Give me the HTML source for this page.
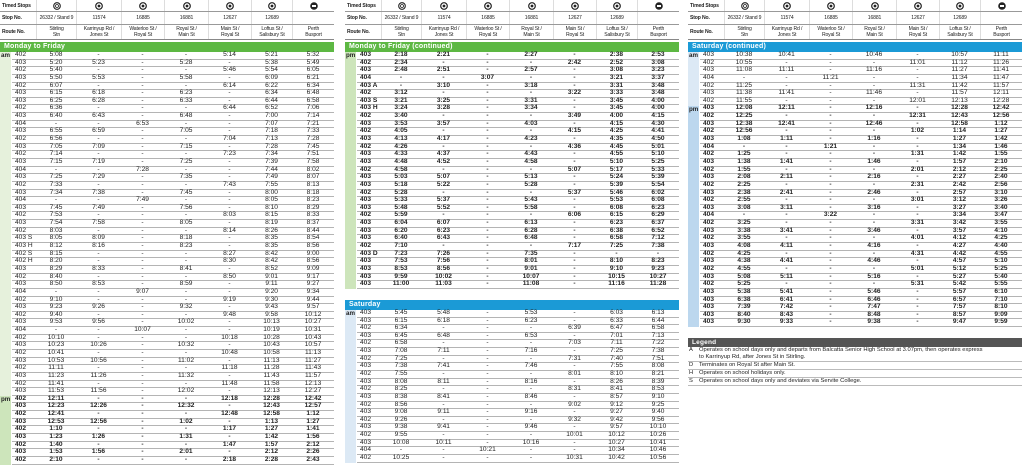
<!DOCTYPE html>
<html><head><meta charset="utf-8"><style>
*{margin:0;padding:0;box-sizing:border-box}
body{width:1024px;height:467px;background:#fff;position:relative;overflow:hidden;font-family:"Liberation Sans Narrow","Liberation Sans",sans-serif;color:#222}
.pn{position:absolute;top:0;width:334px}
.hr{display:grid;grid-template-columns:36px 40px 45px 43px 44px 43px 41px 42px;border-bottom:1px solid #999;font-size:5.1px;align-items:center;white-space:nowrap;letter-spacing:-.15px}
.hr span{text-align:center;border-left:1px solid #ddd;height:100%;display:flex;align-items:center;justify-content:center;line-height:6px;overflow:hidden}
.hr span:first-child{border-left:none;justify-content:flex-start;font-weight:bold;padding-left:2px}
.h1{height:12px}.h2{height:13px}.h3{height:15px;border-bottom:1.5px solid #888}
.bar{height:10px;color:#fff;font-weight:bold;font-size:7px;line-height:10px;padding-left:4px;letter-spacing:.2px}
.g{background:#5db843}.bl{background:#1b9ad6}
.blk{position:relative;padding-left:12px}
.st{position:absolute;left:0;width:11px}
.st b{display:block;font-size:6.2px;padding-left:1px;line-height:7px}
p{height:7.65px;display:grid;grid-template-columns:24px 40px 45px 43px 44px 43px 41px 42px;font-size:6.6px;line-height:6.8px;border-bottom:1px solid #b4b4b4;white-space:nowrap}
p.b{font-weight:bold}
i{font-style:normal;text-align:center}
i:first-child{text-align:left;padding-left:3px}
.lg{position:absolute;left:688px;top:338px;width:334px}
.lg div{font-size:5.8px;line-height:7px;border-bottom:1px solid #bbb;display:grid;grid-template-columns:10px 1fr;padding-left:1px}
</style></head><body>

<!-- PANEL 1 -->
<div class="pn" style="left:0">
<div class="hr h1"><span>Timed Stops</span><span><svg width="8" height="8"><circle cx="4" cy="4" r="3.3" fill="none" stroke="#222" stroke-width="1.1"/><circle cx="4" cy="4" r="1.5" fill="none" stroke="#222" stroke-width=".8"/></svg></span><span><svg width="8" height="8"><circle cx="4" cy="4" r="3.3" fill="none" stroke="#222" stroke-width="1.2"/><circle cx="4" cy="4" r="1.4" fill="#222"/></svg></span><span><svg width="8" height="8"><circle cx="4" cy="4" r="3.3" fill="none" stroke="#222" stroke-width="1.2"/><circle cx="4" cy="4" r="1.4" fill="#222"/></svg></span><span><svg width="8" height="8"><circle cx="4" cy="4" r="3.3" fill="none" stroke="#222" stroke-width="1.2"/><circle cx="4" cy="4" r="1.4" fill="#222"/></svg></span><span><svg width="8" height="8"><circle cx="4" cy="4" r="3.3" fill="none" stroke="#222" stroke-width="1.2"/><circle cx="4" cy="4" r="1.4" fill="#222"/></svg></span><span><svg width="8" height="8"><circle cx="4" cy="4" r="3.3" fill="none" stroke="#222" stroke-width="1.2"/><circle cx="4" cy="4" r="1.4" fill="#222"/></svg></span><span><svg width="8" height="8"><circle cx="4" cy="4" r="3.8" fill="#222"/><rect x="2" y="3" width="4" height="2" fill="#fff"/></svg></span></div>
<div class="hr h2"><span>Stop No.</span><span>26332 / Stand 9</span><span>11574</span><span>16885</span><span>16881</span><span>12627</span><span>12689</span><span></span></div>
<div class="hr h3"><span>Route No.</span><span>Stirling<br>Stn</span><span>Karrinyup Rd /<br>Jones St</span><span>Waterloo St /<br>Royal St</span><span>Royal St /<br>Main St</span><span>Main St /<br>Royal St</span><span>Loftus St /<br>Salisbury St</span><span>Perth<br>Busport</span></div>
<div style="height:2px"></div>
<div class="bar g">Monday to Friday</div>
<div class="blk">
<div class="st" style="top:0;height:344.3px;background:#e6f1dc"><b>am</b></div>
<div class="st" style="top:344.3px;height:68.9px;background:#cde5bb"><b>pm</b></div>
<p><i>402</i><i>5:08</i><i>-</i><i>-</i><i>-</i><i>5:14</i><i>5:21</i><i>5:32</i></p>
<p><i>403</i><i>5:20</i><i>5:23</i><i>-</i><i>5:28</i><i>-</i><i>5:38</i><i>5:49</i></p>
<p><i>402</i><i>5:40</i><i>-</i><i>-</i><i>-</i><i>5:46</i><i>5:54</i><i>6:05</i></p>
<p><i>403</i><i>5:50</i><i>5:53</i><i>-</i><i>5:58</i><i>-</i><i>6:09</i><i>6:21</i></p>
<p><i>402</i><i>6:07</i><i>-</i><i>-</i><i>-</i><i>6:14</i><i>6:22</i><i>6:34</i></p>
<p><i>403</i><i>6:15</i><i>6:18</i><i>-</i><i>6:23</i><i>-</i><i>6:34</i><i>6:48</i></p>
<p><i>403</i><i>6:25</i><i>6:28</i><i>-</i><i>6:33</i><i>-</i><i>6:44</i><i>6:58</i></p>
<p><i>402</i><i>6:36</i><i>-</i><i>-</i><i>-</i><i>6:44</i><i>6:52</i><i>7:06</i></p>
<p><i>403</i><i>6:40</i><i>6:43</i><i>-</i><i>6:48</i><i>-</i><i>7:00</i><i>7:14</i></p>
<p><i>404</i><i>-</i><i>-</i><i>6:53</i><i>-</i><i>-</i><i>7:07</i><i>7:21</i></p>
<p><i>403</i><i>6:55</i><i>6:59</i><i>-</i><i>7:05</i><i>-</i><i>7:18</i><i>7:33</i></p>
<p><i>402</i><i>6:56</i><i>-</i><i>-</i><i>-</i><i>7:04</i><i>7:13</i><i>7:28</i></p>
<p><i>403</i><i>7:05</i><i>7:09</i><i>-</i><i>7:15</i><i>-</i><i>7:28</i><i>7:45</i></p>
<p><i>402</i><i>7:14</i><i>-</i><i>-</i><i>-</i><i>7:23</i><i>7:34</i><i>7:51</i></p>
<p><i>403</i><i>7:15</i><i>7:19</i><i>-</i><i>7:25</i><i>-</i><i>7:39</i><i>7:58</i></p>
<p><i>404</i><i>-</i><i>-</i><i>7:28</i><i>-</i><i>-</i><i>7:44</i><i>8:02</i></p>
<p><i>403</i><i>7:25</i><i>7:29</i><i>-</i><i>7:35</i><i>-</i><i>7:49</i><i>8:07</i></p>
<p><i>402</i><i>7:33</i><i>-</i><i>-</i><i>-</i><i>7:43</i><i>7:55</i><i>8:13</i></p>
<p><i>403</i><i>7:34</i><i>7:38</i><i>-</i><i>7:45</i><i>-</i><i>8:00</i><i>8:18</i></p>
<p><i>404</i><i>-</i><i>-</i><i>7:49</i><i>-</i><i>-</i><i>8:05</i><i>8:23</i></p>
<p><i>403</i><i>7:45</i><i>7:49</i><i>-</i><i>7:56</i><i>-</i><i>8:10</i><i>8:29</i></p>
<p><i>402</i><i>7:53</i><i>-</i><i>-</i><i>-</i><i>8:03</i><i>8:15</i><i>8:33</i></p>
<p><i>403</i><i>7:54</i><i>7:58</i><i>-</i><i>8:05</i><i>-</i><i>8:19</i><i>8:37</i></p>
<p><i>402</i><i>8:03</i><i>-</i><i>-</i><i>-</i><i>8:14</i><i>8:26</i><i>8:44</i></p>
<p><i>403 S</i><i>8:05</i><i>8:09</i><i>-</i><i>8:18</i><i>-</i><i>8:35</i><i>8:54</i></p>
<p><i>403 H</i><i>8:12</i><i>8:16</i><i>-</i><i>8:23</i><i>-</i><i>8:35</i><i>8:56</i></p>
<p><i>402 S</i><i>8:15</i><i>-</i><i>-</i><i>-</i><i>8:27</i><i>8:42</i><i>9:00</i></p>
<p><i>402 H</i><i>8:20</i><i>-</i><i>-</i><i>-</i><i>8:30</i><i>8:42</i><i>8:56</i></p>
<p><i>403</i><i>8:29</i><i>8:33</i><i>-</i><i>8:41</i><i>-</i><i>8:52</i><i>9:09</i></p>
<p><i>402</i><i>8:40</i><i>-</i><i>-</i><i>-</i><i>8:50</i><i>9:01</i><i>9:17</i></p>
<p><i>403</i><i>8:50</i><i>8:53</i><i>-</i><i>8:59</i><i>-</i><i>9:11</i><i>9:27</i></p>
<p><i>404</i><i>-</i><i>-</i><i>9:07</i><i>-</i><i>-</i><i>9:20</i><i>9:34</i></p>
<p><i>402</i><i>9:10</i><i>-</i><i>-</i><i>-</i><i>9:19</i><i>9:30</i><i>9:44</i></p>
<p><i>403</i><i>9:23</i><i>9:26</i><i>-</i><i>9:32</i><i>-</i><i>9:43</i><i>9:57</i></p>
<p><i>402</i><i>9:40</i><i>-</i><i>-</i><i>-</i><i>9:48</i><i>9:58</i><i>10:12</i></p>
<p><i>403</i><i>9:53</i><i>9:56</i><i>-</i><i>10:02</i><i>-</i><i>10:13</i><i>10:27</i></p>
<p><i>404</i><i>-</i><i>-</i><i>10:07</i><i>-</i><i>-</i><i>10:19</i><i>10:31</i></p>
<p><i>402</i><i>10:10</i><i>-</i><i>-</i><i>-</i><i>10:18</i><i>10:28</i><i>10:43</i></p>
<p><i>403</i><i>10:23</i><i>10:26</i><i>-</i><i>10:32</i><i>-</i><i>10:43</i><i>10:57</i></p>
<p><i>402</i><i>10:41</i><i>-</i><i>-</i><i>-</i><i>10:48</i><i>10:58</i><i>11:13</i></p>
<p><i>403</i><i>10:53</i><i>10:56</i><i>-</i><i>11:02</i><i>-</i><i>11:13</i><i>11:27</i></p>
<p><i>402</i><i>11:11</i><i>-</i><i>-</i><i>-</i><i>11:18</i><i>11:28</i><i>11:43</i></p>
<p><i>403</i><i>11:23</i><i>11:26</i><i>-</i><i>11:32</i><i>-</i><i>11:43</i><i>11:57</i></p>
<p><i>402</i><i>11:41</i><i>-</i><i>-</i><i>-</i><i>11:48</i><i>11:58</i><i>12:13</i></p>
<p><i>403</i><i>11:53</i><i>11:56</i><i>-</i><i>12:02</i><i>-</i><i>12:13</i><i>12:27</i></p>
<p class="b"><i>402</i><i>12:11</i><i>-</i><i>-</i><i>-</i><i>12:18</i><i>12:28</i><i>12:42</i></p>
<p class="b"><i>403</i><i>12:23</i><i>12:26</i><i>-</i><i>12:32</i><i>-</i><i>12:43</i><i>12:57</i></p>
<p class="b"><i>402</i><i>12:41</i><i>-</i><i>-</i><i>-</i><i>12:48</i><i>12:58</i><i>1:12</i></p>
<p class="b"><i>403</i><i>12:53</i><i>12:56</i><i>-</i><i>1:02</i><i>-</i><i>1:13</i><i>1:27</i></p>
<p class="b"><i>402</i><i>1:10</i><i>-</i><i>-</i><i>-</i><i>1:17</i><i>1:27</i><i>1:41</i></p>
<p class="b"><i>403</i><i>1:23</i><i>1:26</i><i>-</i><i>1:31</i><i>-</i><i>1:42</i><i>1:56</i></p>
<p class="b"><i>402</i><i>1:40</i><i>-</i><i>-</i><i>-</i><i>1:47</i><i>1:57</i><i>2:12</i></p>
<p class="b"><i>403</i><i>1:53</i><i>1:56</i><i>-</i><i>2:01</i><i>-</i><i>2:12</i><i>2:26</i></p>
<p class="b"><i>402</i><i>2:10</i><i>-</i><i>-</i><i>-</i><i>2:18</i><i>2:28</i><i>2:43</i></p>
</div>
</div>

<!-- PANEL 2 -->
<div class="pn" style="left:345px">
<div class="hr h1"><span>Timed Stops</span><span><svg width="8" height="8"><circle cx="4" cy="4" r="3.3" fill="none" stroke="#222" stroke-width="1.1"/><circle cx="4" cy="4" r="1.5" fill="none" stroke="#222" stroke-width=".8"/></svg></span><span><svg width="8" height="8"><circle cx="4" cy="4" r="3.3" fill="none" stroke="#222" stroke-width="1.2"/><circle cx="4" cy="4" r="1.4" fill="#222"/></svg></span><span><svg width="8" height="8"><circle cx="4" cy="4" r="3.3" fill="none" stroke="#222" stroke-width="1.2"/><circle cx="4" cy="4" r="1.4" fill="#222"/></svg></span><span><svg width="8" height="8"><circle cx="4" cy="4" r="3.3" fill="none" stroke="#222" stroke-width="1.2"/><circle cx="4" cy="4" r="1.4" fill="#222"/></svg></span><span><svg width="8" height="8"><circle cx="4" cy="4" r="3.3" fill="none" stroke="#222" stroke-width="1.2"/><circle cx="4" cy="4" r="1.4" fill="#222"/></svg></span><span><svg width="8" height="8"><circle cx="4" cy="4" r="3.3" fill="none" stroke="#222" stroke-width="1.2"/><circle cx="4" cy="4" r="1.4" fill="#222"/></svg></span><span><svg width="8" height="8"><circle cx="4" cy="4" r="3.8" fill="#222"/><rect x="2" y="3" width="4" height="2" fill="#fff"/></svg></span></div>
<div class="hr h2"><span>Stop No.</span><span>26332 / Stand 9</span><span>11574</span><span>16885</span><span>16881</span><span>12627</span><span>12689</span><span></span></div>
<div class="hr h3"><span>Route No.</span><span>Stirling<br>Stn</span><span>Karrinyup Rd /<br>Jones St</span><span>Waterloo St /<br>Royal St</span><span>Royal St /<br>Main St</span><span>Main St /<br>Royal St</span><span>Loftus St /<br>Salisbury St</span><span>Perth<br>Busport</span></div>
<div style="height:2px"></div>
<div class="bar g">Monday to Friday (continued)</div>
<div class="blk">
<div class="st" style="top:0;height:237.2px;background:#cde5bb"><b>pm</b></div>
<p class="b"><i>403</i><i>2:18</i><i>2:21</i><i>-</i><i>2:27</i><i>-</i><i>2:38</i><i>2:53</i></p>
<p class="b"><i>402</i><i>2:34</i><i>-</i><i>-</i><i>-</i><i>2:42</i><i>2:52</i><i>3:08</i></p>
<p class="b"><i>403</i><i>2:48</i><i>2:51</i><i>-</i><i>2:57</i><i>-</i><i>3:08</i><i>3:23</i></p>
<p class="b"><i>404</i><i>-</i><i>-</i><i>3:07</i><i>-</i><i>-</i><i>3:21</i><i>3:37</i></p>
<p class="b"><i>403 A</i><i>-</i><i>3:10</i><i>-</i><i>3:18</i><i>-</i><i>3:31</i><i>3:48</i></p>
<p class="b"><i>402</i><i>3:12</i><i>-</i><i>-</i><i>-</i><i>3:22</i><i>3:33</i><i>3:48</i></p>
<p class="b"><i>403 S</i><i>3:21</i><i>3:25</i><i>-</i><i>3:31</i><i>-</i><i>3:45</i><i>4:00</i></p>
<p class="b"><i>403 H</i><i>3:24</i><i>3:28</i><i>-</i><i>3:34</i><i>-</i><i>3:45</i><i>4:00</i></p>
<p class="b"><i>402</i><i>3:40</i><i>-</i><i>-</i><i>-</i><i>3:49</i><i>4:00</i><i>4:15</i></p>
<p class="b"><i>403</i><i>3:53</i><i>3:57</i><i>-</i><i>4:03</i><i>-</i><i>4:15</i><i>4:30</i></p>
<p class="b"><i>402</i><i>4:05</i><i>-</i><i>-</i><i>-</i><i>4:15</i><i>4:25</i><i>4:41</i></p>
<p class="b"><i>403</i><i>4:13</i><i>4:17</i><i>-</i><i>4:23</i><i>-</i><i>4:35</i><i>4:50</i></p>
<p class="b"><i>402</i><i>4:26</i><i>-</i><i>-</i><i>-</i><i>4:36</i><i>4:45</i><i>5:01</i></p>
<p class="b"><i>403</i><i>4:33</i><i>4:37</i><i>-</i><i>4:43</i><i>-</i><i>4:55</i><i>5:10</i></p>
<p class="b"><i>403</i><i>4:48</i><i>4:52</i><i>-</i><i>4:58</i><i>-</i><i>5:10</i><i>5:25</i></p>
<p class="b"><i>402</i><i>4:58</i><i>-</i><i>-</i><i>-</i><i>5:07</i><i>5:17</i><i>5:33</i></p>
<p class="b"><i>403</i><i>5:03</i><i>5:07</i><i>-</i><i>5:13</i><i>-</i><i>5:24</i><i>5:39</i></p>
<p class="b"><i>403</i><i>5:18</i><i>5:22</i><i>-</i><i>5:28</i><i>-</i><i>5:39</i><i>5:54</i></p>
<p class="b"><i>402</i><i>5:28</i><i>-</i><i>-</i><i>-</i><i>5:37</i><i>5:46</i><i>6:02</i></p>
<p class="b"><i>403</i><i>5:33</i><i>5:37</i><i>-</i><i>5:43</i><i>-</i><i>5:53</i><i>6:08</i></p>
<p class="b"><i>403</i><i>5:48</i><i>5:52</i><i>-</i><i>5:58</i><i>-</i><i>6:08</i><i>6:23</i></p>
<p class="b"><i>402</i><i>5:59</i><i>-</i><i>-</i><i>-</i><i>6:06</i><i>6:15</i><i>6:29</i></p>
<p class="b"><i>403</i><i>6:04</i><i>6:07</i><i>-</i><i>6:13</i><i>-</i><i>6:23</i><i>6:37</i></p>
<p class="b"><i>403</i><i>6:20</i><i>6:23</i><i>-</i><i>6:28</i><i>-</i><i>6:38</i><i>6:52</i></p>
<p class="b"><i>403</i><i>6:40</i><i>6:43</i><i>-</i><i>6:48</i><i>-</i><i>6:58</i><i>7:12</i></p>
<p class="b"><i>402</i><i>7:10</i><i>-</i><i>-</i><i>-</i><i>7:17</i><i>7:25</i><i>7:38</i></p>
<p class="b"><i>403 D</i><i>7:23</i><i>7:26</i><i>-</i><i>7:35</i><i>-</i><i>-</i><i>-</i></p>
<p class="b"><i>403</i><i>7:53</i><i>7:56</i><i>-</i><i>8:01</i><i>-</i><i>8:10</i><i>8:23</i></p>
<p class="b"><i>403</i><i>8:53</i><i>8:56</i><i>-</i><i>9:01</i><i>-</i><i>9:10</i><i>9:23</i></p>
<p class="b"><i>403</i><i>9:59</i><i>10:02</i><i>-</i><i>10:07</i><i>-</i><i>10:15</i><i>10:27</i></p>
<p class="b"><i>403</i><i>11:00</i><i>11:03</i><i>-</i><i>11:08</i><i>-</i><i>11:16</i><i>11:28</i></p>
</div>
<div style="height:11px"></div>
<div class="bar bl">Saturday</div>
<div class="blk">
<div class="st" style="top:0;height:153px;background:#dce9f5"><b>am</b></div>
<p><i>403</i><i>5:45</i><i>5:48</i><i>-</i><i>5:53</i><i>-</i><i>6:03</i><i>6:13</i></p>
<p><i>403</i><i>6:15</i><i>6:18</i><i>-</i><i>6:23</i><i>-</i><i>6:33</i><i>6:44</i></p>
<p><i>402</i><i>6:34</i><i>-</i><i>-</i><i>-</i><i>6:39</i><i>6:47</i><i>6:58</i></p>
<p><i>403</i><i>6:45</i><i>6:48</i><i>-</i><i>6:53</i><i>-</i><i>7:01</i><i>7:13</i></p>
<p><i>402</i><i>6:58</i><i>-</i><i>-</i><i>-</i><i>7:03</i><i>7:11</i><i>7:22</i></p>
<p><i>403</i><i>7:08</i><i>7:11</i><i>-</i><i>7:16</i><i>-</i><i>7:25</i><i>7:38</i></p>
<p><i>402</i><i>7:25</i><i>-</i><i>-</i><i>-</i><i>7:31</i><i>7:40</i><i>7:51</i></p>
<p><i>403</i><i>7:38</i><i>7:41</i><i>-</i><i>7:46</i><i>-</i><i>7:55</i><i>8:08</i></p>
<p><i>402</i><i>7:55</i><i>-</i><i>-</i><i>-</i><i>8:01</i><i>8:10</i><i>8:21</i></p>
<p><i>403</i><i>8:08</i><i>8:11</i><i>-</i><i>8:16</i><i>-</i><i>8:26</i><i>8:39</i></p>
<p><i>402</i><i>8:25</i><i>-</i><i>-</i><i>-</i><i>8:31</i><i>8:41</i><i>8:53</i></p>
<p><i>403</i><i>8:38</i><i>8:41</i><i>-</i><i>8:46</i><i>-</i><i>8:57</i><i>9:10</i></p>
<p><i>402</i><i>8:56</i><i>-</i><i>-</i><i>-</i><i>9:02</i><i>9:12</i><i>9:25</i></p>
<p><i>403</i><i>9:08</i><i>9:11</i><i>-</i><i>9:16</i><i>-</i><i>9:27</i><i>9:40</i></p>
<p><i>402</i><i>9:26</i><i>-</i><i>-</i><i>-</i><i>9:32</i><i>9:42</i><i>9:56</i></p>
<p><i>403</i><i>9:38</i><i>9:41</i><i>-</i><i>9:46</i><i>-</i><i>9:57</i><i>10:10</i></p>
<p><i>402</i><i>9:55</i><i>-</i><i>-</i><i>-</i><i>10:01</i><i>10:12</i><i>10:26</i></p>
<p><i>403</i><i>10:08</i><i>10:11</i><i>-</i><i>10:16</i><i>-</i><i>10:27</i><i>10:41</i></p>
<p><i>404</i><i>-</i><i>-</i><i>10:21</i><i>-</i><i>-</i><i>10:34</i><i>10:46</i></p>
<p><i>402</i><i>10:25</i><i>-</i><i>-</i><i>-</i><i>10:31</i><i>10:42</i><i>10:56</i></p>
</div>
</div>

<!-- PANEL 3 -->
<div class="pn" style="left:688px">
<div class="hr h1"><span>Timed Stops</span><span><svg width="8" height="8"><circle cx="4" cy="4" r="3.3" fill="none" stroke="#222" stroke-width="1.1"/><circle cx="4" cy="4" r="1.5" fill="none" stroke="#222" stroke-width=".8"/></svg></span><span><svg width="8" height="8"><circle cx="4" cy="4" r="3.3" fill="none" stroke="#222" stroke-width="1.2"/><circle cx="4" cy="4" r="1.4" fill="#222"/></svg></span><span><svg width="8" height="8"><circle cx="4" cy="4" r="3.3" fill="none" stroke="#222" stroke-width="1.2"/><circle cx="4" cy="4" r="1.4" fill="#222"/></svg></span><span><svg width="8" height="8"><circle cx="4" cy="4" r="3.3" fill="none" stroke="#222" stroke-width="1.2"/><circle cx="4" cy="4" r="1.4" fill="#222"/></svg></span><span><svg width="8" height="8"><circle cx="4" cy="4" r="3.3" fill="none" stroke="#222" stroke-width="1.2"/><circle cx="4" cy="4" r="1.4" fill="#222"/></svg></span><span><svg width="8" height="8"><circle cx="4" cy="4" r="3.3" fill="none" stroke="#222" stroke-width="1.2"/><circle cx="4" cy="4" r="1.4" fill="#222"/></svg></span><span><svg width="8" height="8"><circle cx="4" cy="4" r="3.8" fill="#222"/><rect x="2" y="3" width="4" height="2" fill="#fff"/></svg></span></div>
<div class="hr h2"><span>Stop No.</span><span>26332 / Stand 9</span><span>11574</span><span>16885</span><span>16881</span><span>12627</span><span>12689</span><span></span></div>
<div class="hr h3"><span>Route No.</span><span>Stirling<br>Stn</span><span>Karrinyup Rd /<br>Jones St</span><span>Waterloo St /<br>Royal St</span><span>Royal St /<br>Main St</span><span>Main St /<br>Royal St</span><span>Loftus St /<br>Salisbury St</span><span>Perth<br>Busport</span></div>
<div style="height:2px"></div>
<div class="bar bl">Saturday (continued)</div>
<div class="blk">
<div class="st" style="top:0;height:53.5px;background:#dce9f5"><b>am</b></div>
<div class="st" style="top:53.5px;height:221.9px;background:#bcd7ee"><b>pm</b></div>
<p><i>403</i><i>10:38</i><i>10:41</i><i>-</i><i>10:46</i><i>-</i><i>10:57</i><i>11:11</i></p>
<p><i>402</i><i>10:55</i><i>-</i><i>-</i><i>-</i><i>11:01</i><i>11:12</i><i>11:26</i></p>
<p><i>403</i><i>11:08</i><i>11:11</i><i>-</i><i>11:16</i><i>-</i><i>11:27</i><i>11:41</i></p>
<p><i>404</i><i>-</i><i>-</i><i>11:21</i><i>-</i><i>-</i><i>11:34</i><i>11:47</i></p>
<p><i>402</i><i>11:25</i><i>-</i><i>-</i><i>-</i><i>11:31</i><i>11:42</i><i>11:57</i></p>
<p><i>403</i><i>11:38</i><i>11:41</i><i>-</i><i>11:46</i><i>-</i><i>11:57</i><i>12:11</i></p>
<p><i>402</i><i>11:55</i><i>-</i><i>-</i><i>-</i><i>12:01</i><i>12:13</i><i>12:28</i></p>
<p class="b"><i>403</i><i>12:08</i><i>12:11</i><i>-</i><i>12:16</i><i>-</i><i>12:28</i><i>12:42</i></p>
<p class="b"><i>402</i><i>12:25</i><i>-</i><i>-</i><i>-</i><i>12:31</i><i>12:43</i><i>12:56</i></p>
<p class="b"><i>403</i><i>12:38</i><i>12:41</i><i>-</i><i>12:46</i><i>-</i><i>12:58</i><i>1:12</i></p>
<p class="b"><i>402</i><i>12:56</i><i>-</i><i>-</i><i>-</i><i>1:02</i><i>1:14</i><i>1:27</i></p>
<p class="b"><i>403</i><i>1:08</i><i>1:11</i><i>-</i><i>1:16</i><i>-</i><i>1:27</i><i>1:42</i></p>
<p class="b"><i>404</i><i>-</i><i>-</i><i>1:21</i><i>-</i><i>-</i><i>1:34</i><i>1:46</i></p>
<p class="b"><i>402</i><i>1:25</i><i>-</i><i>-</i><i>-</i><i>1:31</i><i>1:42</i><i>1:55</i></p>
<p class="b"><i>403</i><i>1:38</i><i>1:41</i><i>-</i><i>1:46</i><i>-</i><i>1:57</i><i>2:10</i></p>
<p class="b"><i>402</i><i>1:55</i><i>-</i><i>-</i><i>-</i><i>2:01</i><i>2:12</i><i>2:25</i></p>
<p class="b"><i>403</i><i>2:08</i><i>2:11</i><i>-</i><i>2:16</i><i>-</i><i>2:27</i><i>2:40</i></p>
<p class="b"><i>402</i><i>2:25</i><i>-</i><i>-</i><i>-</i><i>2:31</i><i>2:42</i><i>2:56</i></p>
<p class="b"><i>403</i><i>2:38</i><i>2:41</i><i>-</i><i>2:46</i><i>-</i><i>2:57</i><i>3:10</i></p>
<p class="b"><i>402</i><i>2:55</i><i>-</i><i>-</i><i>-</i><i>3:01</i><i>3:12</i><i>3:26</i></p>
<p class="b"><i>403</i><i>3:08</i><i>3:11</i><i>-</i><i>3:16</i><i>-</i><i>3:27</i><i>3:40</i></p>
<p class="b"><i>404</i><i>-</i><i>-</i><i>3:22</i><i>-</i><i>-</i><i>3:34</i><i>3:47</i></p>
<p class="b"><i>402</i><i>3:25</i><i>-</i><i>-</i><i>-</i><i>3:31</i><i>3:42</i><i>3:55</i></p>
<p class="b"><i>403</i><i>3:38</i><i>3:41</i><i>-</i><i>3:46</i><i>-</i><i>3:57</i><i>4:10</i></p>
<p class="b"><i>402</i><i>3:55</i><i>-</i><i>-</i><i>-</i><i>4:01</i><i>4:12</i><i>4:25</i></p>
<p class="b"><i>403</i><i>4:08</i><i>4:11</i><i>-</i><i>4:16</i><i>-</i><i>4:27</i><i>4:40</i></p>
<p class="b"><i>402</i><i>4:25</i><i>-</i><i>-</i><i>-</i><i>4:31</i><i>4:42</i><i>4:55</i></p>
<p class="b"><i>403</i><i>4:38</i><i>4:41</i><i>-</i><i>4:46</i><i>-</i><i>4:57</i><i>5:10</i></p>
<p class="b"><i>402</i><i>4:55</i><i>-</i><i>-</i><i>-</i><i>5:01</i><i>5:12</i><i>5:25</i></p>
<p class="b"><i>403</i><i>5:08</i><i>5:11</i><i>-</i><i>5:16</i><i>-</i><i>5:27</i><i>5:40</i></p>
<p class="b"><i>402</i><i>5:25</i><i>-</i><i>-</i><i>-</i><i>5:31</i><i>5:42</i><i>5:55</i></p>
<p class="b"><i>403</i><i>5:38</i><i>5:41</i><i>-</i><i>5:46</i><i>-</i><i>5:57</i><i>6:10</i></p>
<p class="b"><i>403</i><i>6:38</i><i>6:41</i><i>-</i><i>6:46</i><i>-</i><i>6:57</i><i>7:10</i></p>
<p class="b"><i>403</i><i>7:39</i><i>7:42</i><i>-</i><i>7:47</i><i>-</i><i>7:57</i><i>8:10</i></p>
<p class="b"><i>403</i><i>8:40</i><i>8:43</i><i>-</i><i>8:48</i><i>-</i><i>8:57</i><i>9:09</i></p>
<p class="b"><i>403</i><i>9:30</i><i>9:33</i><i>-</i><i>9:38</i><i>-</i><i>9:47</i><i>9:59</i></p>
</div>
</div>

<div class="lg">
<div class="bar" style="background:#555;display:block;height:9px;line-height:9px;font-size:6.5px;border:none;padding-left:4px">Legend</div>
<div><span>A</span><span>Operates on school days only and departs from Balcatta Senior High School at 3.07pm, then operates express<br>to Karrinyup Rd, after Jones St in Stirling.</span></div>
<div><span>D</span><span>Terminates on Royal St after Main St.</span></div>
<div><span>H</span><span>Operates on school holidays only.</span></div>
<div><span>S</span><span>Operates on school days only and deviates via Servite College.</span></div>
</div>
</body></html>
